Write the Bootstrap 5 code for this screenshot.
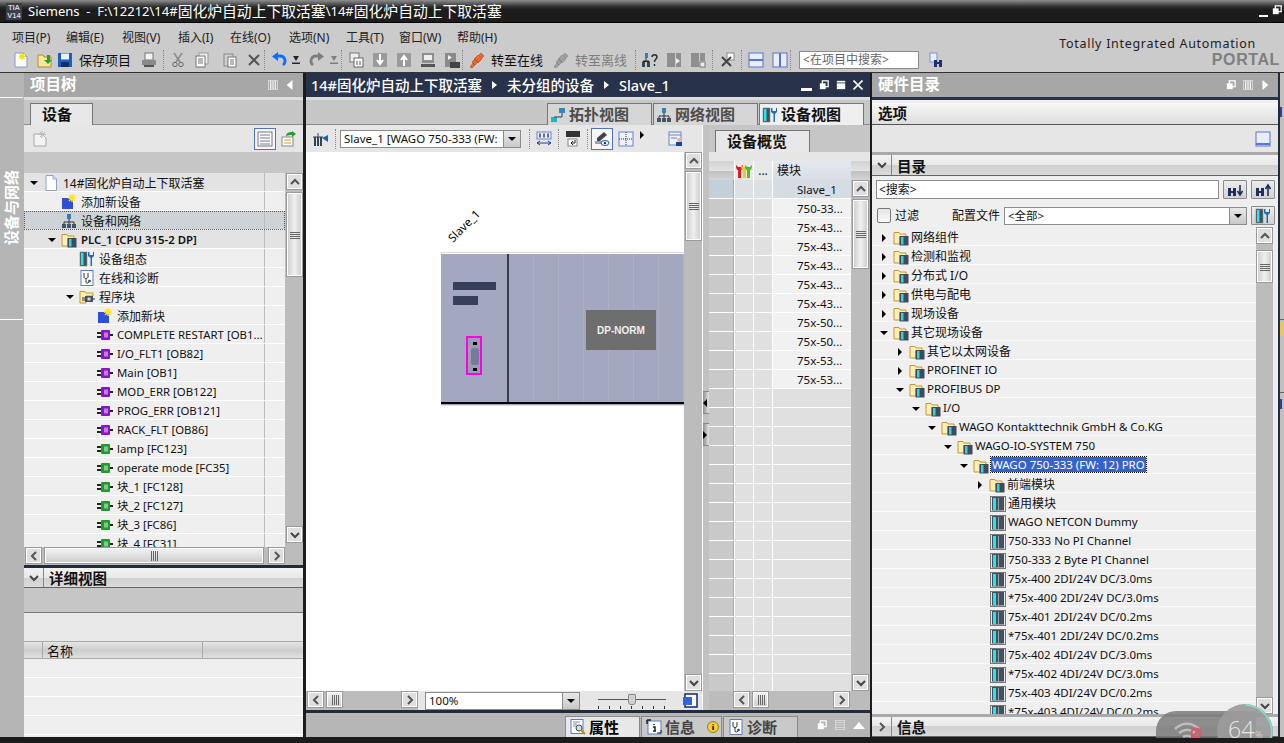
<!DOCTYPE html>
<html lang="zh-CN">

<head>
  <meta charset="UTF-8" />
  <meta name="viewport" content="width=device-width, initial-scale=1" />
  <title>Siemens - TIA Portal</title>
  <link href="https://cdn.jsdelivr.net/npm/bootstrap@5.3.3/dist/css/bootstrap.min.css" rel="stylesheet" />
  <style>
    html, body { height: 100%; }
    body {
      width: 1284px;
      height: 743px;
      overflow: hidden;
      background: #1c1c1c;
      color: #111;
      font-family: "Noto Sans", "Noto Sans CJK SC", sans-serif;
      font-size: 11.5px;
      line-height: 1;
    }
    svg { display: block; flex: none; }
    .ic { width: 16px; height: 16px; }
    .ic-s { width: 10px; height: 10px; }
    .cn { font-size: 12px; }
    .text-ob { color: #8a12c9; }
    .text-fc { color: #1f9a2e; }

    /* title bar */
    .title-bar { height: 23px; padding: 0 2px 0 6px; background: linear-gradient(#8e8e8e, #2a2a2a 7px, #1c1c1c 10px); border-bottom: 1px solid #000; color: #fff; font-size: 13px; }
    .title-cn { font-size: 14.8px; }
    .app-logo { width: 16px; height: 17px; margin-right: 6px; font: bold 7.5px/8px "Liberation Sans", sans-serif; text-align: center; color: #cfd3da; background: #3b3f45; padding-top: 1px; }
    .win-min { display: block; width: 9px; height: 2px; background: #fff; margin: 10px 4px 0 0; }

    /* menu + toolbar */
    .top-area { height: 50px; background: #cbcbcb; border-bottom: 1px solid #333; }
    .menu-row { height: 24px; padding: 5px 0 0 12px; font-size: 12px; color: #222; }
    .menu-row span { display: block; width: 56px; }
    .menu-row span:nth-child(1) { width: 54px; }
    .menu-row span:nth-child(4) { width: 52px; }
    .menu-row span:nth-child(5) { width: 59px; }
    .menu-row span:nth-child(6) { width: 57px; }
    .menu-row span:nth-child(7) { width: 53px; }
    .menu-row span:nth-child(8) { width: 58px; }
    .tool-row { height: 26px; padding-left: 11px; font-size: 13px; }
    .tb { width: 20px; height: 20px; display: flex; align-items: center; justify-content: center; flex: none; }
    .tb-n { width: 14px; }
    .tb-sep { width: 1px; height: 20px; border-left: 1px dotted #8a8a8a; flex: none; }
    .txt-off { color: #7d7d7d; }
    .proj-search { width: 120px; height: 18px; background: #fff; border: 1px solid #8c8c8c; padding: 2px 3px; font-size: 12px; color: #666; flex: none; }
    .brand { width: 250px; padding: 15px 4px 0 0; text-align: right; flex: none; }
    .brand-a { font-size: 12.5px; margin-right: 24px; letter-spacing: .7px; color: #222; }
    .brand-b { font: bold 16px "Liberation Sans", sans-serif; color: #7f7f7f; letter-spacing: .6px; }

    /* workspace */
    .work { height: 664px; }
    .side-strip { width: 24px; background: #b5b5b5; }
    .strip-line { height: 1px; background: #fff; width: 23px; }
    .strip-mid { height: 221px; padding-top: 71px; }
    .strip-txt { writing-mode: vertical-rl; text-orientation: sideways; transform: rotate(180deg); color: #fff; font-weight: 700; font-size: 15px; height: 76px; width: 23px; line-height: 23px; text-align: center; }
    .tree-pane { width: 279px; }
    .center-pane { width: 564px; margin-left: 3px; }
    .cat-pane { width: 408px; margin-left: 2px; border-right: 2px solid #222b3c; background: #efefef; }
    .right-strip { width: 4px; background: #c0c0c0; }
    .edge-a { margin-top: 34px; height: 10px; border-left: 2px solid #2f3f8f; }
    .edge-b { margin-top: 202px; height: 1px; background: #666; }
    .edge-c { margin-top: 2px; height: 14px; background: #e8c668; }
    .edge-d { margin-top: 56px; height: 1px; background: #666; }
    .edge-e { margin-top: 6px; height: 10px; border-left: 2px solid #2f3f8f; }

    .pane-head { height: 24px; background: #a7a7a7; color: #fff; font-weight: 700; font-size: 15.5px; padding: 0 8px 0 6px; }
    .head-tools { gap: 7px; }
    .crumb-head { height: 24px; background: #28324a; color: #fff; font-size: 14.5px; font-weight: 500; padding: 0 7px 0 5px; }
    .crumb-arrow { width: 0; height: 0; border-left: 5px solid #fff; border-top: 4px solid transparent; border-bottom: 4px solid transparent; margin: 0 10px; }
    .crumb-min { display: block; width: 11px; height: 3px; background: #fff; margin-top: 8px; }

    .tab-band { height: 28px; background: linear-gradient(#dddddd 3px, #c6c6c6 3px); border-bottom: 1px solid #8a8a8a; padding: 6px 0 0 6px; }
    .tab-x { width: 63px; height: 22px; background: #e8e8e8; border: 1px solid #777; border-bottom: 0; font-weight: 700; font-size: 15px; display: flex; align-items: center; padding-left: 11px; }
    .tool-band { height: 27px; background: #e6e6e6; }
    .gray-band { height: 21px; background: #c6c6c6; }

    /* trees */
    .tree-row { height: 19px; padding-top: 2px; background: #efefef linear-gradient(#bcbcbc, #bcbcbc) 240px 0 / 1px 100% no-repeat; border-bottom: 1px solid #fff; padding-left: calc(var(--lv, 0) * 18px); white-space: nowrap; font-size: 11.4px; }
    .tree-row .cn { margin-top: 2px; }
    .tree-row.grp { background-color: #e3e3e3; }
    .tree-row.sel { background-color: #ced3d8; outline: 1px dotted #555; outline-offset: -1px; }
    .caret-slot { width: 17px; display: flex; justify-content: center; flex: none; }
    .caret-d { width: 0; height: 0; border-top: 4px solid #000; border-left: 4px solid transparent; border-right: 4px solid transparent; margin-left: 2px; }
    .caret-r { width: 0; height: 0; border-left: 4px solid #000; border-top: 4px solid transparent; border-bottom: 4px solid transparent; }
    .caret-l { width: 0; height: 0; border-right: 4px solid #000; border-top: 4px solid transparent; border-bottom: 4px solid transparent; }
    .row-ic { margin: 0 4px 0 2px; }
    .lv-1 { --lv: 1; } .lv-2 { --lv: 2; } .lv-3 { --lv: 3; } .lv-4 { --lv: 4; } .lv-5 { --lv: 5; } .lv-6 { --lv: 6; }
    .tree-list { width: 261px; height: 374px; overflow: hidden; }
    .cat-list { width: 384px; height: 487px; overflow: hidden; }
    .cat-row { height: 19px; padding-top: 3px; border-bottom: 1px solid #fafafa; padding-left: calc(4px + var(--lv, 0) * 16px); white-space: nowrap; gap: 2px; background: #efefef; }
    .cat-row .caret-slot { width: 16px; }
    .cat-row .ic { margin-left: -1px; }
    .cat-row .ic.no-caret { margin-left: 18px; }
    .cat-row > span:not(.cn):not(.caret-slot) { margin-top: -2px; }
    .cat-sel { background: #3563c9; color: #fff; outline: 1px dotted #111; padding: 2px 1px; }

    /* scroll bars */
    .vscroll { width: 18px; background: #bcbcbc; padding: 0 1px; flex: none; }
    .sb-btn { width: 17px; height: 17px; background: #dfdfdf; border: 2px solid #fff; outline: 1px solid #9a9a9a; outline-offset: -1px; display: flex; align-items: center; justify-content: center; flex: none; }
    .sb-thumb { background: linear-gradient(90deg, #d0d0d0, #f0f0f0 50%, #d0d0d0); border: 2px solid #fff; outline: 1px solid #9a9a9a; outline-offset: -1px; display: flex; align-items: center; justify-content: center; flex: none; }
    .thumb-tree { height: 85px; width: 17px; margin-top: 2px; }
    .thumb-canvas { height: 70px; width: 17px; margin-top: 2px; }
    .thumb-ov { height: 70px; width: 17px; margin-top: 2px; }
    .thumb-cat { height: 33px; width: 17px; margin-top: 6px; }
    .hscroll { height: 18px; background: #bcbcbc; }
    .thumb-h { height: 17px; background: linear-gradient(#f0f0f0, #d0d0d0); }
    .thumb-wide { width: 220px; margin: 0 4px 0 2px; }
    .thumb-small { width: 17px; margin-left: 2px; }
    .btn-first { margin-left: 1px; }

    /* detail view */
    .sep-dark { height: 3px; background: #222b3c; }
    .sect-head { background: linear-gradient(#f2f2f2, #e8e8e8 50%, #d0d0d0 50%, #dadada); border-bottom: 1px solid #666; font-weight: 700; font-size: 14.5px; }
    .sect-chev { width: 20px; height: 100%; display: flex; align-items: center; justify-content: center; border-right: 1px solid #888; margin-right: 5px; }
    .sect-txt { padding-top: 2px; }
    .detail-head { height: 20px; }
    .detail-band { height: 25px; background: #c6c6c6; border-bottom: 1px solid #777; }
    .detail-blank { height: 28px; background: #e9e9e9; }
    .detail-cols { height: 18px; background: linear-gradient(#e6e6e6, #cdcdcd 50%, #e0e0e0); border-top: 1px solid #aaa; border-bottom: 1px solid #aaa; font-size: 13px; }
    .dc-a { width: 19px; border-right: 1px solid #aaa; height: 100%; }
    .dc-b { width: 160px; border-right: 1px solid #aaa; height: 100%; padding: 3px 0 0 4px; }
    .detail-rows { height: 78px; background: repeating-linear-gradient(#efefef 0 18px, #fff 18px 19px); }

    /* centre */
    .view-tabs { height: 28px; background: linear-gradient(#dcdcdc 3px, #c6c6c6 3px); border-bottom: 1px solid #8a8a8a; padding: 6px 6px 0 0; gap: 1px; }
    .view-tab { width: 105px; height: 22px; background: #d6d6d6; border: 1px solid #777; border-bottom: 0; color: #4d4d4d; font-weight: 700; font-size: 15px; gap: 3px; padding-left: 2px; }
    .view-tab.on { background: #efefef; color: #111; }
    .center-body { height: 585px; }
    .editor { width: 396px; }
    .ed-tools { padding-left: 5px; height: 27px; background: #e6e6e6; }
    .combo { height: 18px; background: #fff; border: 1px solid #8c8c8c; font-size: 11.5px; overflow: hidden; white-space: nowrap; flex: none; }
    .combo-txt { flex: 1; overflow: hidden; padding-left: 3px; line-height: 16px; }
    .combo-btn { width: 17px; height: 100%; background: linear-gradient(#e8e8e8, #c8c8c8); border-left: 1px solid #8c8c8c; display: flex; align-items: center; justify-content: center; flex: none; }
    .combo-dev { width: 181px; }
    .tb-on { outline: 1px solid #4e73c9; background: #f5f7fb; }
    .canvas-row { height: 539px; }
    .canvas-area { width: 378px; background: #fff; position: relative; overflow: hidden; }
    .dev-label { position: absolute; left: 149px; top: 79px; transform: rotate(-45deg); transform-origin: left bottom; font-size: 11.5px; line-height: 14px; color: #000; }
    .rack { position: absolute; left: 135px; top: 100px; width: 243px; height: 154px; border-top: 1px solid #d8d8e0; border-bottom: 1px solid #e0e0e0; background: #a3a8c0; }
    .rack-inner { height: 151px; border-top: 1px solid #fff; border-bottom: 2px solid #000; position: relative; }
    .rack-head { width: 68px; height: 100%; border-right: 2px solid #373d50; position: relative; }
    .rack-slots { flex: 1; background: repeating-linear-gradient(90deg, #a3a8c0 0 24px, #adb1c4 24px 25px); }
    .rack-bar-a { position: absolute; left: 12px; top: 28px; width: 43px; height: 8px; background: #37405a; }
    .rack-bar-b { position: absolute; left: 12px; top: 42px; width: 25px; height: 9px; background: #37405a; }
    .rack-port { position: absolute; left: 25px; top: 82px; width: 16px; height: 39px; border: 2px solid #ff00e6; background: #9a9fb0; }
    .port-shape { position: absolute; left: 3px; top: 10px; width: 8px; height: 17px; background: #737c98; border-radius: 2px; }
    .port-dot { position: absolute; left: 5px; width: 4px; height: 3px; background: #000; }
    .dot-a { top: 4px; } .dot-b { top: 30px; }
    .dp-box { position: absolute; left: 145px; top: 56px; width: 70px; height: 40px; background: #6e6e6e; color: #eee; font: bold 10px "Liberation Sans", sans-serif; }
    .ed-bottom { height: 19px; background: #e6e6e6; }
    .h-track { width: 112px; background: #bcbcbc; height: 19px; padding-left: 1px; flex: none; }
    .combo-zoom { width: 155px; margin-left: 7px; }
    .zoom-slider { width: 68px; margin-left: 18px; position: relative; height: 19px; }
    .zoom-line { position: absolute; left: 0; right: 0; top: 8px; height: 1px; background: #555; }
    .zoom-knob { position: absolute; left: 30px; top: 3px; width: 8px; height: 11px; background: #d0d0d0; border: 1px solid #888; border-radius: 1px 1px 3px 3px; }
    .zoom-ticks { position: absolute; left: 0; right: 0; top: 15px; height: 3px; background: repeating-linear-gradient(90deg, #333 0 1px, transparent 1px 11px); }
    .splitter { width: 7px; background: #c2c2c2; border-left: 1px solid #fff; }
    .split-grip { height: 23px; background: linear-gradient(90deg, #8e8e8e, #e4e4e4); border-top: 1px solid #888; border-bottom: 1px solid #888; display: flex; align-items: center; }
    .grip-a { margin-top: 266px; }
    .grip-b { margin-top: 9px; }

    /* device overview */
    .overview { width: 161px; }
    .ov-band { height: 27px; background: #c6c6c6; padding: 5px 0 0 6px; }
    .ov-tab { width: 95px; height: 22px; background: #e8e8e8; border: 1px solid #777; border-bottom: 0; font-weight: 700; font-size: 15px; padding-left: 11px; }
    .ov-gap { height: 9px; background: #e6e6e6; }
    .ov-head { height: 19px; background: linear-gradient(#d2d2d2, #e2e2e2 50%, #bfbfbf 50%, #d5d5d5); font-size: 12px; }
    .oc-a { width: 25px; flex: none; height: 100%; }
    .oc-b, .oc-c { width: 19px; flex: none; height: 100%; border-left: 1px solid #fff; }
    .oc-d { width: 79px; flex: none; height: 100%; border-left: 1px solid #fff; }
    .ov-head .oc-d { background: linear-gradient(#e4e9ee, #d7dde4); padding: 4px 0 0 4px; }
    .ov-head .oc-b, .ov-head .oc-c { background: #e8e8e8; }
    .ov-rows { width: 142px; height: 511px; overflow: hidden; }
    .ov-row { height: 19px; border-bottom: 1px solid #fff; }
    .ov-row .oc-a { background: #c9c9c9; border-right: 1px solid #aaa; }
    .ov-row .oc-b, .ov-row .oc-c { background: #e0e0e0; }
    .ov-row .oc-d { background: #e0e0e0; padding: 4px 0 0 24px; font-size: 11.5px; white-space: nowrap; }
    .ov-row.full .oc-d { background: #f1f1f1; }
    .ov-row.cur .oc-a { background: #c4d0d9; }
    .ov-row.cur .oc-d { background: #d5dce3; }
    .ov-row.cur .oc-b, .ov-row.cur .oc-c { background: #dde1e4; }
    .ov-scroll { width: 19px; }
    .ov-hbar { height: 19px; background: #bcbcbc; padding-left: 24px; }
    .ov-htrack { width: 117px; }

    .insp-bar { height: 24px; background: #b6b6b6; padding-right: 5px; }
    .insp-tab { height: 21px; border: 1px solid #8a8a8a; border-bottom: 0; background: #c9c9c9; color: #444; font-weight: 700; font-size: 15px; gap: 3px; margin-top: 3px; padding-left: 4px; }
    .insp-tab.on { background: #e8e8e8; color: #000; }
    .it-a { width: 75px; } .it-b { width: 81px; margin-left: 1px; } .it-c { width: 75px; margin-left: 1px; }
    .insp-tools { margin-left: 19px; gap: 8px; }
    .tri-up { width: 0; height: 0; border-bottom: 7px solid #fff; border-left: 6px solid transparent; border-right: 6px solid transparent; }
    .info-dot { width: 12px; height: 12px; border-radius: 50%; background: #f2cf2f; border: 1px solid #9c8214; color: #000; font: bold 9px/10px "Liberation Serif", serif; text-align: center; margin-left: 9px; }

    /* catalog */
    .opt-head { height: 25px; background: linear-gradient(#f6f6f6, #dedede); border-bottom: 1px solid #555; border-top: 3px solid #f0f0f0; font-weight: 700; font-size: 14.5px; padding-left: 6px; }
    .navy-line { height: 3px; background: #28324a; }
    .opt-body { height: 27px; background: #e6e6e6; padding-right: 3px; }
    .thin-gray { height: 3px; background: #a9a9a9; }
    .cat-head { height: 21px; }
    .search-row { height: 27px; background: #efefef; padding: 4px 3px 3px 4px; gap: 4px; }
    .search-in { width: 343px; height: 19px; background: #fff; border: 1px solid #8c8c8c; padding: 3px 2px; font-size: 12px; flex: none; }
    .icon-btn { width: 24px; height: 19px; background: linear-gradient(#ececec, #d2d2d2); border: 1px solid #8c8c8c; display: flex; align-items: center; justify-content: center; flex: none; border-radius: 1px; }
    .filter-row { height: 24px; background: #efefef; padding: 3px 3px 2px 5px; font-size: 12px; }
    .check-box { width: 14px; height: 15px; background: linear-gradient(#e4e4e4, #fafafa); border: 1px solid #777; border-radius: 2px; margin-right: 4px; }
    .combo-prof { width: 243px; margin: 0 4px; }
    .cat-scroll { width: 17px; padding: 0; }
    .cat-pad { width: 5px; }
    .info-head { height: 20px; }

    /* tray widget over the window */
    .net-pill { position: absolute; left: 1156px; top: 711px; width: 100px; height: 27px; background: rgba(120, 120, 120, .82); border-radius: 20px 0 0 0; }
    .net-ring { position: absolute; left: 1216px; top: 703px; width: 58px; height: 35px; }
    .net-wifi { position: absolute; left: 1173px; top: 720px; width: 32px; height: 18px; }
    .net-pct { position: absolute; left: 1228px; top: 718px; color: #e6e6e6; font: 300 23px/23px "Open Sans", sans-serif; }
    .net-pct small { font-size: 9px; margin-left: 1px; }
  </style>
</head>

<body class="position-relative">

  <!-- icon sprites -->
  <svg width="0" height="0" class="position-absolute">
    <symbol id="i-folder" viewBox="0 0 16 16"><path d="M1 2.5h5l1 1.500h6v3H7v7H1z" fill="#fdeeb5" stroke="#c7962c"/><rect x="6.500" y="6" width="9" height="9.500" fill="#3f4b5c"/><rect x="8" y="7" width="2.500" height="7.500" fill="#2fd5dc"/></symbol>
    <symbol id="i-mod" viewBox="0 0 16 16"><rect x=".5" y=".5" width="15" height="15" fill="#e8e8e8" stroke="#777"/><rect x="2" y="1" width="12" height="13.500" fill="#45505f"/><rect x="3" y="2" width="3" height="12" fill="#1fe6f0"/><rect x="8" y="2" width="1" height="12" fill="#9aa3ad"/></symbol>
    <symbol id="i-block" viewBox="0 0 16 16"><rect x="4" y="3" width="9" height="10" rx="1" fill="currentColor"/><rect y="5" width="4" height="2" fill="#222"/><rect y="9" width="4" height="2" fill="#222"/><rect x="13" y="7" width="3" height="2" fill="#222"/><rect x="7" y="5.500" width="4" height="5" fill="#fff" opacity=".45"/></symbol>
    <symbol id="i-add" viewBox="0 0 16 16"><rect x="1" y="4" width="11" height="11" fill="#2f4fd6"/><path d="M11 0v8M7 4h8M8 1l6 6M14 1 8 7" stroke="#ffe81a" stroke-width="1.400"/></symbol>
    <symbol id="i-net" viewBox="0 0 16 16"><rect x="6" y="1" width="4" height="5" fill="#2f7fb8"/><path d="M8 6v3M3 12V9h10v3M8 9v3" stroke="#333" fill="none"/><rect x="1" y="11" width="4" height="4" fill="#456"/><rect x="6" y="11" width="4" height="4" fill="#456"/><rect x="11" y="11" width="4" height="4" fill="#456"/></symbol>
    <symbol id="i-cfg" viewBox="0 0 16 16"><rect x="1" y="1" width="7" height="14" fill="#45505f" stroke="#888" stroke-width=".6"/><rect x="2" y="2" width="2.500" height="12" fill="#1fe6f0"/><path d="M9 1v4l2.500 2v8h1.500V7l2-2V1h-1v3h-3.500V1z" fill="#1c6fb5"/></symbol>
    <symbol id="i-diag" viewBox="0 0 16 16"><rect x="2" y=".5" width="12" height="15" fill="#fff" stroke="#5b7ac7"/><path d="M5 3v4c0 2 4 2 4 0V3M7 9v3c0 1.500 2 1.500 3 0" stroke="#333" fill="none"/><circle cx="10.500" cy="11" r="1.300" fill="#1d3d8f"/></symbol>
    <symbol id="i-doc" viewBox="0 0 16 16"><path d="M3 .5h7l3.500 3.500v11.500H3z" fill="#fff" stroke="#8aa0cf"/><path d="M10 .5V4h3.500" fill="#dfe6f5" stroke="#8aa0cf"/></symbol>
    <symbol id="i-pfolder" viewBox="0 0 16 16"><path d="M1 2.500h5l1 1.500h7v3H7v7H1z" fill="#fdeeb5" stroke="#c7962c"/><rect x="6" y="7" width="8" height="6" fill="#454f5d"/><path d="M3 9h3M3 11h3M14 10h2" stroke="#333"/><rect x="8.500" y="8.500" width="3" height="3" fill="#cfd6dd"/></symbol>
    <symbol id="i-chev-up" viewBox="0 0 10 10"><path d="M1 7l4-4 4 4" fill="none" stroke="#555" stroke-width="2"/></symbol>
    <symbol id="i-chev-dn" viewBox="0 0 10 10"><path d="M1 3l4 4 4-4" fill="none" stroke="#444" stroke-width="2"/></symbol>
    <symbol id="i-chev-l" viewBox="0 0 10 10"><path d="M7 1 3 5l4 4" fill="none" stroke="#555" stroke-width="2"/></symbol>
    <symbol id="i-chev-r" viewBox="0 0 10 10"><path d="M3 1l4 4-4 4" fill="none" stroke="#555" stroke-width="2"/></symbol>
    <symbol id="i-grip-h" viewBox="0 0 10 10"><path d="M0 2.500h10M0 4.500h10M0 6.500h10M0 8.500h10" stroke="#666"/></symbol>
    <symbol id="i-grip-v" viewBox="0 0 10 10"><path d="M2.500 0v10M4.500 0v10M6.500 0v10M8.500 0v10" stroke="#666"/></symbol>
    <symbol id="i-new" viewBox="0 0 16 16"><path d="M2 1h8l4 4v10H2z" fill="#fff" stroke="#7f9ad6"/><path d="M9 1v7M6 4.500h7M6.500 2l5 5M11.500 2l-5 5" stroke="#f6e100" stroke-width="1.200"/></symbol>
    <symbol id="i-open" viewBox="0 0 16 16"><path d="M1 3h5l1 2h7v10H1z" fill="#fbe49b" stroke="#b48a2b"/><path d="M7 8h3V3h3v5h2l-4 4z" fill="#1ea32f"/></symbol>
    <symbol id="i-save" viewBox="0 0 16 16"><rect x="1" y="1" width="14" height="14" fill="#1f5dbb"/><rect x="4" y="1.500" width="8" height="6" fill="#eaf1fb"/><rect x="4" y="10" width="8" height="5" fill="#0f2f6a"/></symbol>
    <symbol id="i-print" viewBox="0 0 16 16"><rect x="4" y="1" width="8" height="7" fill="#f4f4f4" stroke="#777"/><rect x="1" y="8" width="14" height="5" fill="#8a8a8a"/><rect x="3" y="13" width="10" height="2" fill="#555"/></symbol>
    <symbol id="i-cut" viewBox="0 0 16 16"><path d="M4 1l6 9M12 1 6 10" stroke="#8a8a8a" stroke-width="1.500"/><circle cx="5" cy="12.500" r="2.200" fill="none" stroke="#666"/><circle cx="11" cy="12.500" r="2.200" fill="none" stroke="#666"/></symbol>
    <symbol id="i-copy" viewBox="0 0 16 16"><rect x="5" y="1" width="9" height="11" fill="#eee" stroke="#999"/><rect x="2" y="4" width="9" height="11" fill="#fafafa" stroke="#777"/><path d="M4 7h5M4 9h5M4 11h5" stroke="#777"/></symbol>
    <symbol id="i-paste" viewBox="0 0 16 16"><rect x="2" y="2" width="9" height="12" fill="#cfcfcf" stroke="#888"/><rect x="6" y="5" width="8" height="10" fill="#fafafa" stroke="#777"/><path d="M8 8h4M8 10h4M8 12h4" stroke="#777"/></symbol>
    <symbol id="i-del" viewBox="0 0 16 16"><path d="M3 3l10 10M13 3 3 13" stroke="#555" stroke-width="2"/></symbol>
    <symbol id="i-x-w" viewBox="0 0 10 10"><path d="M.5.5l9 9M9.500.5l-9 9" stroke="#fff" stroke-width="1.600"/></symbol>
    <symbol id="i-undo" viewBox="0 0 16 16"><path d="M4 4h5a5 5 0 0 1 3 9" fill="none" stroke="currentColor" stroke-width="2.800"/><path d="M1 4.500 7 0v9z" fill="currentColor"/></symbol>
    <symbol id="i-redo" viewBox="0 0 16 16"><path d="M12 4H7a5 5 0 0 0-3 9" fill="none" stroke="currentColor" stroke-width="2.800"/><path d="M15 4.500 9 0v9z" fill="currentColor"/></symbol>
    <symbol id="i-drop" viewBox="0 0 10 10"><path d="M2 1h6L5 6z" fill="currentColor"/><rect x="1" y="7.500" width="8" height="1.500" fill="currentColor"/></symbol>
    <symbol id="i-gray-a" viewBox="0 0 16 16"><rect x="2" y="1" width="9" height="9" fill="#eee" stroke="#777"/><rect x="6" y="6" width="9" height="9" fill="#fff" stroke="#666"/><path d="M9 9v4M12 9v4" stroke="#555"/></symbol>
    <symbol id="i-gray-b" viewBox="0 0 16 16"><rect x="1" y="1" width="14" height="14" fill="#9a9a9a"/><path d="M8 2v9M5 8l3 4 3-4" stroke="#fff" stroke-width="2" fill="none"/></symbol>
    <symbol id="i-gray-c" viewBox="0 0 16 16"><rect x="1" y="1" width="14" height="14" fill="#9a9a9a"/><path d="M8 14V5M5 8l3-4 3 4" stroke="#fff" stroke-width="2" fill="none"/></symbol>
    <symbol id="i-gray-d" viewBox="0 0 16 16"><rect x="2" y="1" width="12" height="10" fill="#8f8f8f"/><rect x="4" y="3" width="8" height="5" fill="#eee"/><rect x="1" y="12" width="14" height="3" fill="#555"/></symbol>
    <symbol id="i-gray-e" viewBox="0 0 16 16"><rect x="1" y="1" width="11" height="14" fill="#8a8a8a"/><path d="M4 3v5l4-2.500z" fill="#eee"/><rect x="6" y="10" width="10" height="6" fill="#444"/></symbol>
    <symbol id="i-online" viewBox="0 0 16 16"><path d="M1 15l3-4 2 2-3 3zM6 7l3 3-3 3-3-3zM9 3l4 4-4 4-4-4zM12 1l3 3-2 2-3-3z" fill="#f0682a" stroke="#a33d10" stroke-width=".5"/></symbol>
    <symbol id="i-offline" viewBox="0 0 16 16"><path d="M1 15l3-4 2 2-3 3zM6 7l3 3-3 3-3-3zM9 3l4 4-4 4-4-4zM12 1l3 3-2 2-3-3z" fill="#a0a0a0" stroke="#777" stroke-width=".5"/></symbol>
    <symbol id="i-netq" viewBox="0 0 16 16"><rect x="3" y="1" width="3" height="5" fill="#2f7fb8"/><rect y="10" width="3" height="5" fill="#345"/><rect x="5" y="10" width="3" height="5" fill="#345"/><path d="M4 6v3M1 10V9h6v1" stroke="#333"/><path d="M10 5c0-3 5-3 5 0 0 2-2.500 2-2.500 5M12.500 12v2" stroke="#233" stroke-width="1.500" fill="none"/></symbol>
    <symbol id="i-split-a" viewBox="0 0 16 16"><rect x="1" y="1" width="8" height="14" fill="#8f8f8f"/><rect x="10" y="1" width="5" height="14" fill="#8f8f8f"/><path d="M10 6l4 3-4 3z" fill="#eee"/></symbol>
    <symbol id="i-split-b" viewBox="0 0 16 16"><rect x="1" y="1" width="8" height="14" fill="#8f8f8f"/><rect x="10" y="1" width="5" height="8" fill="#8f8f8f"/><rect x="10" y="10" width="5" height="5" fill="#eee" stroke="#777"/></symbol>
    <symbol id="i-closex" viewBox="0 0 16 16"><rect x="8" y="1" width="7" height="7" fill="#fff" stroke="#888"/><path d="M3 5l9 9M12 5l-9 9" stroke="#444" stroke-width="2"/></symbol>
    <symbol id="i-hsplit" viewBox="0 0 16 16"><rect x="1" y="1" width="14" height="14" fill="#e8eefb" stroke="#5a75d0"/><path d="M1 8h14" stroke="#5a75d0" stroke-width="2"/></symbol>
    <symbol id="i-vsplit" viewBox="0 0 16 16"><rect x="1" y="1" width="14" height="14" fill="#e8eefb" stroke="#5a75d0"/><path d="M8 1v14" stroke="#5a75d0" stroke-width="2"/></symbol>
    <symbol id="i-panel" viewBox="0 0 16 16"><rect x="1" y="1" width="14" height="14" fill="#e8eefb" stroke="#5a75d0"/><path d="M1 13h14" stroke="#5a75d0" stroke-width="2"/></symbol>
    <symbol id="i-binoc" viewBox="0 0 16 16"><rect x="1" y="1" width="7" height="9" fill="#e8eefb" stroke="#7f93c9"/><path d="M5 8h3v7H5zM10 8h3v7h-3zM8 10h2v2H8z" fill="#1d2f7a"/></symbol>
    <symbol id="i-search-dn" viewBox="0 0 16 16"><path d="M1 6h3v8H1zM6 6h3v8H6zM4 9h2v2H4z" fill="#1d2f5a"/><path d="M13 3v9M10.500 9l2.500 4 2.500-4" stroke="#1d2f5a" stroke-width="1.600" fill="none"/></symbol>
    <symbol id="i-search-up" viewBox="0 0 16 16"><path d="M1 6h3v8H1zM6 6h3v8H6zM4 9h2v2H4z" fill="#1d2f5a"/><path d="M13 14V4M10.500 7 13 3l2.500 4" stroke="#1d2f5a" stroke-width="1.600" fill="none"/></symbol>
    <symbol id="i-tree-view" viewBox="0 0 16 16"><rect x="1" y="1" width="14" height="14" fill="#fff" stroke="#777"/><path d="M3 4h10M3 7h10M3 10h10M3 13h10" stroke="#778"/></symbol>
    <symbol id="i-export" viewBox="0 0 16 16"><rect x="1" y="6" width="11" height="9" fill="#fff" stroke="#888"/><path d="M3 9h7M3 12h7" stroke="#c9a52a"/><path d="M5 5c0-3 3-4 6-4V0l4 3-4 3V4c-2 0-4 0-6 1z" fill="#1ea32f"/></symbol>
    <symbol id="i-add-gray" viewBox="0 0 16 16"><path d="M2 3h8l4 4v8H2z" fill="#f4f4f4" stroke="#a8a8a8"/><path d="M10 0v7M7 3.500h7M8 1l5 5M13 1 8 6" stroke="#b9b9b9"/></symbol>
    <symbol id="i-topo" viewBox="0 0 16 16"><rect x="9" y="1" width="6" height="5" fill="#2f86c4"/><rect x="1" y="10" width="6" height="5" fill="#21b4c9"/><path d="M12 6v4H4" stroke="#245" fill="none"/></symbol>
    <symbol id="i-zoomdoc" viewBox="0 0 16 16"><rect x="1" y=".5" width="12" height="14" fill="#fff" stroke="#5b7ac7"/><path d="M3 3h7M3 5h4M3 7h3" stroke="#889"/><circle cx="9" cy="9" r="3" fill="#cfe0f5" stroke="#444"/><path d="M11 11l4 4" stroke="#c08a1c" stroke-width="2"/></symbol>
    <symbol id="i-infodoc" viewBox="0 0 16 16"><rect x="2" y="2" width="13" height="13" fill="#fff" stroke="#5b7ac7"/><path d="M1 1h4M1 1v4" stroke="#123" stroke-width="1.500"/><path d="M8 5v1M7 8h2v4M7 12h3" stroke="#123" stroke-width="1.500" fill="none"/><path d="M11 14h4M15 14v-3" stroke="#123"/></symbol>
    <symbol id="i-restore" viewBox="0 0 12 12"><rect x="4" y="1" width="7" height="7" fill="none" stroke="#fff" stroke-width="1.500"/><rect x="1" y="4" width="7" height="7" fill="#fff"/></symbol>
    <symbol id="i-stack" viewBox="0 0 12 12"><path d="M3 1v10M5 1v10M7 1v10M9 1v10" stroke="#fff"/><rect x=".5" y=".5" width="11" height="11" fill="none" stroke="#ddd"/></symbol>
    <symbol id="i-rows" viewBox="0 0 12 12"><path d="M1 3h10M1 6h10M1 9h10" stroke="#ddd"/><rect x=".5" y=".5" width="11" height="11" fill="none" stroke="#ddd"/></symbol>
    <symbol id="i-block-w" viewBox="0 0 12 12"><rect x="1" y="1" width="10" height="2" fill="#fff"/><rect x="1" y="4" width="10" height="7" fill="#fff"/></symbol>
    <symbol id="i-tri-l" viewBox="0 0 8 12"><path d="M7 0v12L0 6z" fill="#fff"/></symbol>
    <symbol id="i-tri-r" viewBox="0 0 8 12"><path d="M1 0v12l7-6z" fill="#fff"/></symbol>
    <symbol id="i-fit" viewBox="0 0 16 16"><rect x="3" y="1" width="12" height="13" fill="#fff" stroke="#12296b" stroke-width="1.500"/><rect x="1" y="4" width="9" height="8" fill="#2f63e0"/></symbol>
    <symbol id="i-devnet" viewBox="0 0 16 16"><rect x="1" y="6" width="2" height="9" fill="#345"/><rect x="4" y="6" width="2" height="9" fill="#345"/><rect x="7" y="6" width="2" height="9" fill="#345"/><path d="M5 2v4M0 6h10" stroke="#345"/><path d="M9 7l6-3v7z" fill="#1c5fb5"/></symbol>
    <symbol id="i-compare" viewBox="0 0 16 16"><rect x="1" y="1" width="14" height="7" fill="#e8eefb" stroke="#6a84cf"/><path d="M4 2.500v4M8 2.500v4M12 2.500v4" stroke="#445" stroke-width="1.500"/><path d="M1 12h14M4 10l-3 2 3 2M12 10l3 2-3 2" stroke="#1c3fa5" fill="none"/></symbol>
    <symbol id="i-name" viewBox="0 0 16 16"><rect x="1" width="14" height="6" fill="#333"/><rect x="3" y="8" width="9" height="7" fill="#fff" stroke="#888"/><path d="M10 9v3H6l2-2M6 12l2 2" stroke="#222" fill="none"/></symbol>
    <symbol id="i-eye" viewBox="0 0 16 16"><path d="M1 10h14v3H1z" fill="#9aa3b5"/><path d="M10 1l3 3-7 6H3V7z" fill="#444"/><ellipse cx="11" cy="12" rx="4" ry="2.500" fill="#fff" stroke="#1c5fb5"/><circle cx="11" cy="12" r="1.300" fill="#1c3fa5"/></symbol>
    <symbol id="i-grid" viewBox="0 0 16 16"><rect x="1" y="1" width="14" height="14" fill="#eef2fb" stroke="#6a84cf"/><path d="M1 8h14M8 1v14" stroke="#333" stroke-dasharray="1 1"/></symbol>
    <symbol id="i-winuser" viewBox="0 0 16 16"><rect x="1" y="1" width="12" height="13" fill="#eef2fb" stroke="#6a84cf"/><path d="M1 4h12M3 7h6" stroke="#6a84cf"/><circle cx="11" cy="9" r="2" fill="#e8b88a"/><rect x="8" y="11" width="6" height="4" fill="#1c3fa5"/></symbol>
    <symbol id="i-wrench" viewBox="0 0 16 16"><path d="M0 2c0 4 1 5 2 5v8h3V7c1 0 2-1 2-5L5 4H2z" fill="#d51f1f"/><path d="M5 2c0 4 1 5 2 5v8h3V7c1 0 2-1 2-5l-2 2H7z" fill="#f2c91c"/><path d="M9 2c0 4 1 5 2 5v8h3V7c1 0 2-1 2-5l-2 2h-3z" fill="#5cb531"/></symbol>
  </svg>

  <!-- Title bar -->
  <header class="title-bar d-flex align-items-center">
    <div class="app-logo">TIA<br>V14</div>
    <span>Siemens&nbsp; -&nbsp; F:\12212\14#</span><span class="title-cn">固化炉自动上下取活塞</span><span>\14#</span><span class="title-cn">固化炉自动上下取活塞</span>
    <div class="d-flex ms-auto">
      <span class="win-min"></span>
      <svg class="ic-s"><use href="#i-restore"/></svg>
    </div>
  </header>

  <!-- Menu and toolbar -->
  <div class="top-area d-flex">
    <div class="flex-grow-1">
      <nav class="menu-row d-flex align-items-center">
        <span>项目(P)</span>
        <span>编辑(E)</span>
        <span>视图(V)</span>
        <span>插入(I)</span>
        <span>在线(O)</span>
        <span>选项(N)</span>
        <span>工具(T)</span>
        <span>窗口(W)</span>
        <span>帮助(H)</span>
      </nav>
      <div class="tool-row d-flex align-items-center">
        <div class="tb"><svg class="ic"><use href="#i-new"/></svg></div>
        <div class="tb ms-1"><svg class="ic"><use href="#i-open"/></svg></div>
        <div class="tb"><svg class="ic"><use href="#i-save"/></svg></div>
        <span class="ms-1">保存项目</span>
        <div class="tb ms-2"><svg class="ic"><use href="#i-print"/></svg></div>
        <div class="tb-sep ms-1"></div>
        <div class="tb ms-1"><svg class="ic"><use href="#i-cut"/></svg></div>
        <div class="tb ms-1"><svg class="ic"><use href="#i-copy"/></svg></div>
        <div class="tb ms-2"><svg class="ic"><use href="#i-paste"/></svg></div>
        <div class="tb ms-1"><svg class="ic"><use href="#i-del"/></svg></div>
        <div class="tb-sep"></div>
        <div class="tb text-primary ms-1"><svg class="ic"><use href="#i-undo"/></svg></div>
        <div class="tb tb-n text-dark"><svg class="ic-s"><use href="#i-drop"/></svg></div>
        <div class="tb ms-1 txt-off"><svg class="ic"><use href="#i-redo"/></svg></div>
        <div class="tb tb-n txt-off"><svg class="ic-s"><use href="#i-drop"/></svg></div>
        <div class="tb-sep"></div>
        <div class="tb ms-1"><svg class="ic"><use href="#i-gray-a"/></svg></div>
        <div class="tb ms-1"><svg class="ic"><use href="#i-gray-b"/></svg></div>
        <div class="tb ms-1"><svg class="ic"><use href="#i-gray-c"/></svg></div>
        <div class="tb ms-1"><svg class="ic"><use href="#i-gray-d"/></svg></div>
        <div class="tb ms-1"><svg class="ic"><use href="#i-gray-e"/></svg></div>
        <div class="tb-sep"></div>
        <div class="tb ms-1"><svg class="ic"><use href="#i-online"/></svg></div>
        <span class="ms-1">转至在线</span>
        <div class="tb ms-2"><svg class="ic"><use href="#i-offline"/></svg></div>
        <span class="txt-off ms-1">转至离线</span>
        <div class="tb-sep ms-2"></div>
        <div class="tb ms-1"><svg class="ic"><use href="#i-netq"/></svg></div>
        <div class="tb ms-1"><svg class="ic"><use href="#i-split-a"/></svg></div>
        <div class="tb ms-1"><svg class="ic"><use href="#i-split-b"/></svg></div>
        <div class="tb-sep ms-1"></div>
        <div class="tb ms-1"><svg class="ic"><use href="#i-closex"/></svg></div>
        <div class="tb-sep ms-1"></div>
        <div class="tb ms-1"><svg class="ic"><use href="#i-hsplit"/></svg></div>
        <div class="tb ms-1"><svg class="ic"><use href="#i-vsplit"/></svg></div>
        <div class="tb-sep"></div>
        <div class="proj-search ms-2">&lt;在项目中搜索&gt;</div>
        <div class="tb ms-2"><svg class="ic"><use href="#i-binoc"/></svg></div>
      </div>
    </div>
    <div class="brand">
      <div class="brand-a">Totally Integrated Automation</div>
      <div class="brand-b">PORTAL</div>
    </div>
  </div>

  <main class="work d-flex">

    <!-- Portal strip -->
    <div class="side-strip d-flex flex-column">
      <div class="strip-line mt-4"></div>
      <div class="strip-mid"><div class="strip-txt">设备与网络</div></div>
      <div class="strip-line"></div>
    </div>

    <!-- Project tree -->
    <section class="tree-pane d-flex flex-column">
      <div class="pane-head d-flex align-items-center">
        <span>项目树</span>
        <div class="head-tools d-flex align-items-center ms-auto">
          <svg class="ic-s"><use href="#i-stack"/></svg>
          <svg class="ic-s"><use href="#i-tri-l"/></svg>
        </div>
      </div>
      <div class="tab-band"><div class="tab-x">设备</div></div>
      <div class="tool-band d-flex align-items-center px-1">
        <svg class="ic ms-1"><use href="#i-add-gray"/></svg>
        <div class="tb tb-on ms-auto"><svg class="ic"><use href="#i-tree-view"/></svg></div>
        <div class="tb ms-1"><svg class="ic"><use href="#i-export"/></svg></div>
      </div>
      <div class="gray-band"></div>
      <div class="d-flex">
        <div class="tree-list">
          <div class="tree-row grp d-flex align-items-center"><span class="caret-slot"><i class="caret-d"></i></span><svg class="ic row-ic"><use href="#i-doc"/></svg><span class="cn">14#固化炉自动上下取活塞</span></div>
          <div class="tree-row lv-1 d-flex align-items-center"><span class="caret-slot"></span><svg class="ic row-ic"><use href="#i-add"/></svg><span class="cn">添加新设备</span></div>
          <div class="tree-row sel lv-1 d-flex align-items-center"><span class="caret-slot"></span><svg class="ic row-ic"><use href="#i-net"/></svg><span class="cn">设备和网络</span></div>
          <div class="tree-row grp lv-1 d-flex align-items-center fw-semibold"><span class="caret-slot"><i class="caret-d"></i></span><svg class="ic row-ic"><use href="#i-folder"/></svg><span>PLC_1 [CPU 315-2 DP]</span></div>
          <div class="tree-row lv-2 d-flex align-items-center"><span class="caret-slot"></span><svg class="ic row-ic"><use href="#i-cfg"/></svg><span class="cn">设备组态</span></div>
          <div class="tree-row lv-2 d-flex align-items-center"><span class="caret-slot"></span><svg class="ic row-ic"><use href="#i-diag"/></svg><span class="cn">在线和诊断</span></div>
          <div class="tree-row lv-2 d-flex align-items-center"><span class="caret-slot"><i class="caret-d"></i></span><svg class="ic row-ic"><use href="#i-pfolder"/></svg><span class="cn">程序块</span></div>
          <div class="tree-row lv-3 d-flex align-items-center"><span class="caret-slot"></span><svg class="ic row-ic"><use href="#i-add"/></svg><span class="cn">添加新块</span></div>
          <div class="tree-row lv-3 d-flex align-items-center"><span class="caret-slot"></span><svg class="ic row-ic text-ob"><use href="#i-block"/></svg><span>COMPLETE RESTART [OB1...</span></div>
          <div class="tree-row lv-3 d-flex align-items-center"><span class="caret-slot"></span><svg class="ic row-ic text-ob"><use href="#i-block"/></svg><span>I/O_FLT1 [OB82]</span></div>
          <div class="tree-row lv-3 d-flex align-items-center"><span class="caret-slot"></span><svg class="ic row-ic text-ob"><use href="#i-block"/></svg><span>Main [OB1]</span></div>
          <div class="tree-row lv-3 d-flex align-items-center"><span class="caret-slot"></span><svg class="ic row-ic text-ob"><use href="#i-block"/></svg><span>MOD_ERR [OB122]</span></div>
          <div class="tree-row lv-3 d-flex align-items-center"><span class="caret-slot"></span><svg class="ic row-ic text-ob"><use href="#i-block"/></svg><span>PROG_ERR [OB121]</span></div>
          <div class="tree-row lv-3 d-flex align-items-center"><span class="caret-slot"></span><svg class="ic row-ic text-ob"><use href="#i-block"/></svg><span>RACK_FLT [OB86]</span></div>
          <div class="tree-row lv-3 d-flex align-items-center"><span class="caret-slot"></span><svg class="ic row-ic text-fc"><use href="#i-block"/></svg><span>lamp [FC123]</span></div>
          <div class="tree-row lv-3 d-flex align-items-center"><span class="caret-slot"></span><svg class="ic row-ic text-fc"><use href="#i-block"/></svg><span>operate mode [FC35]</span></div>
          <div class="tree-row lv-3 d-flex align-items-center"><span class="caret-slot"></span><svg class="ic row-ic text-fc"><use href="#i-block"/></svg><span>块_1 [FC128]</span></div>
          <div class="tree-row lv-3 d-flex align-items-center"><span class="caret-slot"></span><svg class="ic row-ic text-fc"><use href="#i-block"/></svg><span>块_2 [FC127]</span></div>
          <div class="tree-row lv-3 d-flex align-items-center"><span class="caret-slot"></span><svg class="ic row-ic text-fc"><use href="#i-block"/></svg><span>块_3 [FC86]</span></div>
          <div class="tree-row lv-3 d-flex align-items-center"><span class="caret-slot"></span><svg class="ic row-ic text-fc"><use href="#i-block"/></svg><span>块_4 [FC31]</span></div>
        </div>
        <div class="vscroll d-flex flex-column">
          <div class="sb-btn"><svg class="ic-s"><use href="#i-chev-up"/></svg></div>
          <div class="sb-thumb thumb-tree"><svg class="ic-s"><use href="#i-grip-h"/></svg></div>
          <div class="sb-btn mt-auto mb-1"><svg class="ic-s"><use href="#i-chev-dn"/></svg></div>
        </div>
      </div>
      <div class="hscroll d-flex">
        <div class="sb-btn btn-first"><svg class="ic-s"><use href="#i-chev-l"/></svg></div>
        <div class="sb-thumb thumb-h thumb-wide"><svg class="ic-s"><use href="#i-grip-v"/></svg></div>
        <div class="sb-btn"><svg class="ic-s"><use href="#i-chev-r"/></svg></div>
      </div>
      <div class="sep-dark"></div>
      <div class="sect-head detail-head d-flex align-items-center">
        <span class="sect-chev"><svg class="ic-s"><use href="#i-chev-dn"/></svg></span>
        <span class="sect-txt">详细视图</span>
      </div>
      <div class="detail-band"></div>
      <div class="detail-blank"></div>
      <div class="detail-cols d-flex">
        <div class="dc-a"></div>
        <div class="dc-b">名称</div>
      </div>
      <div class="detail-rows"></div>
    </section>

    <!-- Device editor -->
    <section class="center-pane d-flex flex-column">
      <div class="crumb-head d-flex align-items-center">
        <span>14#固化炉自动上下取活塞</span><i class="crumb-arrow"></i>
        <span>未分组的设备</span><i class="crumb-arrow"></i>
        <span>Slave_1</span>
        <div class="head-tools d-flex align-items-center ms-auto">
          <span class="crumb-min"></span>
          <svg class="ic-s"><use href="#i-restore"/></svg>
          <svg class="ic-s"><use href="#i-block-w"/></svg>
          <svg class="ic-s"><use href="#i-x-w"/></svg>
        </div>
      </div>
      <div class="view-tabs d-flex justify-content-end">
        <div class="view-tab d-flex align-items-center"><svg class="ic"><use href="#i-topo"/></svg>拓扑视图</div>
        <div class="view-tab d-flex align-items-center"><svg class="ic"><use href="#i-net"/></svg>网络视图</div>
        <div class="view-tab on d-flex align-items-center"><svg class="ic"><use href="#i-cfg"/></svg>设备视图</div>
      </div>
      <div class="center-body d-flex">
        <div class="editor d-flex flex-column">
          <div class="ed-tools d-flex align-items-center">
            <div class="tb"><svg class="ic"><use href="#i-devnet"/></svg></div>
            <div class="tb-sep ms-1 me-1"></div>
            <div class="combo combo-dev d-flex align-items-center">
              <div class="combo-txt">Slave_1 [WAGO 750-333 (FW:</div>
              <div class="combo-btn"><i class="caret-d m-0"></i></div>
            </div>
            <div class="tb-sep ms-2"></div>
            <div class="tb ms-1"><svg class="ic"><use href="#i-compare"/></svg></div>
            <div class="tb-sep ms-1"></div>
            <div class="tb ms-1"><svg class="ic"><use href="#i-name"/></svg></div>
            <div class="tb-sep ms-1"></div>
            <div class="tb tb-on ms-1"><svg class="ic"><use href="#i-eye"/></svg></div>
            <div class="tb ms-1"><svg class="ic"><use href="#i-grid"/></svg></div>
            <i class="caret-r ms-1 mb-2"></i>
            <div class="tb ms-auto me-3"><svg class="ic"><use href="#i-winuser"/></svg></div>
          </div>
          <div class="canvas-row d-flex">
            <div class="canvas-area">
              <div class="dev-label">Slave_1</div>
              <div class="rack">
                <div class="rack-inner d-flex">
                  <div class="rack-head">
                    <div class="rack-bar-a"></div>
                    <div class="rack-bar-b"></div>
                    <div class="rack-port">
                      <div class="port-dot dot-a"></div>
                      <div class="port-shape"></div>
                      <div class="port-dot dot-b"></div>
                    </div>
                  </div>
                  <div class="rack-slots"></div>
                  <div class="dp-box d-flex align-items-center justify-content-center">DP-NORM</div>
                </div>
              </div>
            </div>
            <div class="vscroll d-flex flex-column">
              <div class="sb-btn"><svg class="ic-s"><use href="#i-chev-up"/></svg></div>
              <div class="sb-thumb thumb-canvas"><svg class="ic-s"><use href="#i-grip-h"/></svg></div>
              <div class="sb-btn mt-auto"><svg class="ic-s"><use href="#i-chev-dn"/></svg></div>
            </div>
          </div>
          <div class="ed-bottom d-flex align-items-center">
            <div class="h-track d-flex">
              <div class="sb-btn"><svg class="ic-s"><use href="#i-chev-l"/></svg></div>
              <div class="sb-thumb thumb-h thumb-small"><svg class="ic-s"><use href="#i-grip-v"/></svg></div>
              <div class="sb-btn ms-auto"><svg class="ic-s"><use href="#i-chev-r"/></svg></div>
            </div>
            <div class="combo combo-zoom d-flex align-items-center">
              <div class="combo-txt">100%</div>
              <div class="combo-btn"><i class="caret-d m-0"></i></div>
            </div>
            <div class="zoom-slider">
              <div class="zoom-line"></div>
              <div class="zoom-ticks"></div>
              <div class="zoom-knob"></div>
            </div>
            <svg class="ic ms-auto me-1"><use href="#i-fit"/></svg>
          </div>
        </div>
        <div class="splitter">
          <div class="split-grip grip-a"><i class="caret-l"></i></div>
          <div class="split-grip grip-b"><i class="caret-r"></i></div>
        </div>
        <div class="overview d-flex flex-column">
          <div class="ov-band"><div class="ov-tab d-flex align-items-center">设备概览</div></div>
          <div class="ov-gap"></div>
          <div class="ov-head d-flex">
            <div class="oc-a"></div>
            <div class="oc-b d-flex align-items-center justify-content-center"><svg class="ic"><use href="#i-wrench"/></svg></div>
            <div class="oc-c text-center pt-1">...</div>
            <div class="oc-d">模块</div>
          </div>
          <div class="d-flex">
            <div class="ov-rows" id="ovRows">
              <div class="ov-row cur full d-flex"><div class="oc-a"></div><div class="oc-b"></div><div class="oc-c"></div><div class="oc-d">Slave_1</div></div>
              <div class="ov-row full d-flex"><div class="oc-a"></div><div class="oc-b"></div><div class="oc-c"></div><div class="oc-d">750-33...</div></div>
              <div class="ov-row full d-flex"><div class="oc-a"></div><div class="oc-b"></div><div class="oc-c"></div><div class="oc-d">75x-43...</div></div>
              <div class="ov-row full d-flex"><div class="oc-a"></div><div class="oc-b"></div><div class="oc-c"></div><div class="oc-d">75x-43...</div></div>
              <div class="ov-row full d-flex"><div class="oc-a"></div><div class="oc-b"></div><div class="oc-c"></div><div class="oc-d">75x-43...</div></div>
              <div class="ov-row full d-flex"><div class="oc-a"></div><div class="oc-b"></div><div class="oc-c"></div><div class="oc-d">75x-43...</div></div>
              <div class="ov-row full d-flex"><div class="oc-a"></div><div class="oc-b"></div><div class="oc-c"></div><div class="oc-d">75x-43...</div></div>
              <div class="ov-row full d-flex"><div class="oc-a"></div><div class="oc-b"></div><div class="oc-c"></div><div class="oc-d">75x-50...</div></div>
              <div class="ov-row full d-flex"><div class="oc-a"></div><div class="oc-b"></div><div class="oc-c"></div><div class="oc-d">75x-50...</div></div>
              <div class="ov-row full d-flex"><div class="oc-a"></div><div class="oc-b"></div><div class="oc-c"></div><div class="oc-d">75x-53...</div></div>
              <div class="ov-row full d-flex"><div class="oc-a"></div><div class="oc-b"></div><div class="oc-c"></div><div class="oc-d">75x-53...</div></div>
            </div>
            <div class="vscroll ov-scroll d-flex flex-column">
              <div class="sb-btn"><svg class="ic-s"><use href="#i-chev-up"/></svg></div>
              <div class="sb-thumb thumb-ov"><svg class="ic-s"><use href="#i-grip-h"/></svg></div>
              <div class="sb-btn mt-auto"><svg class="ic-s"><use href="#i-chev-dn"/></svg></div>
            </div>
          </div>
          <div class="ov-hbar d-flex">
            <div class="ov-htrack d-flex">
              <div class="sb-btn"><svg class="ic-s"><use href="#i-chev-l"/></svg></div>
              <div class="sb-thumb thumb-h thumb-small"><svg class="ic-s"><use href="#i-grip-v"/></svg></div>
              <div class="sb-btn ms-auto"><svg class="ic-s"><use href="#i-chev-r"/></svg></div>
            </div>
          </div>
        </div>
      </div>
      <div class="sep-dark"></div>
      <div class="insp-bar d-flex justify-content-end">
        <div class="insp-tab on it-a d-flex align-items-center"><svg class="ic"><use href="#i-zoomdoc"/></svg>属性</div>
        <div class="insp-tab it-b d-flex align-items-center"><svg class="ic"><use href="#i-infodoc"/></svg>信息<span class="info-dot">i</span></div>
        <div class="insp-tab it-c d-flex align-items-center"><svg class="ic"><use href="#i-diag"/></svg>诊断</div>
        <div class="insp-tools d-flex align-items-center">
          <svg class="ic-s"><use href="#i-restore"/></svg>
          <svg class="ic-s"><use href="#i-rows"/></svg>
          <i class="tri-up"></i>
        </div>
      </div>
    </section>

    <!-- Hardware catalog -->
    <section class="cat-pane d-flex flex-column">
      <div class="pane-head d-flex align-items-center">
        <span>硬件目录</span>
        <div class="head-tools d-flex align-items-center ms-auto">
          <svg class="ic-s"><use href="#i-restore"/></svg>
          <svg class="ic-s"><use href="#i-stack"/></svg>
          <svg class="ic-s"><use href="#i-tri-r"/></svg>
        </div>
      </div>
      <div class="navy-line"></div>
      <div class="opt-head d-flex align-items-center">选项</div>
      <div class="opt-body d-flex align-items-center justify-content-end"><svg class="ic me-1"><use href="#i-panel"/></svg></div>
      <div class="thin-gray"></div>
      <div class="sect-head cat-head d-flex align-items-center">
        <span class="sect-chev"><svg class="ic-s"><use href="#i-chev-dn"/></svg></span>
        <span class="sect-txt">目录</span>
      </div>
      <div class="search-row d-flex">
        <div class="search-in">&lt;搜索&gt;</div>
        <div class="icon-btn"><svg class="ic"><use href="#i-search-dn"/></svg></div>
        <div class="icon-btn"><svg class="ic"><use href="#i-search-up"/></svg></div>
      </div>
      <div class="filter-row d-flex align-items-center">
        <div class="check-box"></div>
        <span>过滤</span>
        <span class="ms-auto">配置文件</span>
        <div class="combo combo-prof d-flex align-items-center">
          <div class="combo-txt">&lt;全部&gt;</div>
          <div class="combo-btn"><i class="caret-d m-0"></i></div>
        </div>
        <div class="icon-btn"><svg class="ic"><use href="#i-cfg"/></svg></div>
      </div>
      <div class="d-flex">
        <div class="cat-list">
          <div class="cat-row d-flex align-items-center"><span class="caret-slot"><i class="caret-r"></i></span><svg class="ic"><use href="#i-folder"/></svg><span class="cn">网络组件</span></div>
          <div class="cat-row d-flex align-items-center"><span class="caret-slot"><i class="caret-r"></i></span><svg class="ic"><use href="#i-folder"/></svg><span class="cn">检测和监视</span></div>
          <div class="cat-row d-flex align-items-center"><span class="caret-slot"><i class="caret-r"></i></span><svg class="ic"><use href="#i-folder"/></svg><span class="cn">分布式 I/O</span></div>
          <div class="cat-row d-flex align-items-center"><span class="caret-slot"><i class="caret-r"></i></span><svg class="ic"><use href="#i-folder"/></svg><span class="cn">供电与配电</span></div>
          <div class="cat-row d-flex align-items-center"><span class="caret-slot"><i class="caret-r"></i></span><svg class="ic"><use href="#i-folder"/></svg><span class="cn">现场设备</span></div>
          <div class="cat-row d-flex align-items-center"><span class="caret-slot"><i class="caret-d m-0"></i></span><svg class="ic"><use href="#i-folder"/></svg><span class="cn">其它现场设备</span></div>
          <div class="cat-row lv-1 d-flex align-items-center"><span class="caret-slot"><i class="caret-r"></i></span><svg class="ic"><use href="#i-folder"/></svg><span class="cn">其它以太网设备</span></div>
          <div class="cat-row lv-1 d-flex align-items-center"><span class="caret-slot"><i class="caret-r"></i></span><svg class="ic"><use href="#i-folder"/></svg><span>PROFINET IO</span></div>
          <div class="cat-row lv-1 d-flex align-items-center"><span class="caret-slot"><i class="caret-d m-0"></i></span><svg class="ic"><use href="#i-folder"/></svg><span>PROFIBUS DP</span></div>
          <div class="cat-row lv-2 d-flex align-items-center"><span class="caret-slot"><i class="caret-d m-0"></i></span><svg class="ic"><use href="#i-folder"/></svg><span>I/O</span></div>
          <div class="cat-row lv-3 d-flex align-items-center"><span class="caret-slot"><i class="caret-d m-0"></i></span><svg class="ic"><use href="#i-folder"/></svg><span>WAGO Kontakttechnik GmbH &amp; Co.KG</span></div>
          <div class="cat-row lv-4 d-flex align-items-center"><span class="caret-slot"><i class="caret-d m-0"></i></span><svg class="ic"><use href="#i-folder"/></svg><span>WAGO-IO-SYSTEM 750</span></div>
          <div class="cat-row lv-5 d-flex align-items-center"><span class="caret-slot"><i class="caret-d m-0"></i></span><svg class="ic"><use href="#i-folder"/></svg><span class="cat-sel">WAGO 750-333 (FW: 12) PRO</span></div>
          <div class="cat-row lv-6 d-flex align-items-center"><span class="caret-slot"><i class="caret-r"></i></span><svg class="ic"><use href="#i-folder"/></svg><span class="cn">前端模块</span></div>
          <div class="cat-row lv-6 d-flex align-items-center"><svg class="ic no-caret"><use href="#i-mod"/></svg><span class="cn">通用模块</span></div>
          <div class="cat-row lv-6 d-flex align-items-center"><svg class="ic no-caret"><use href="#i-mod"/></svg><span>WAGO NETCON Dummy</span></div>
          <div class="cat-row lv-6 d-flex align-items-center"><svg class="ic no-caret"><use href="#i-mod"/></svg><span>750-333 No PI Channel</span></div>
          <div class="cat-row lv-6 d-flex align-items-center"><svg class="ic no-caret"><use href="#i-mod"/></svg><span>750-333 2 Byte PI Channel</span></div>
          <div class="cat-row lv-6 d-flex align-items-center"><svg class="ic no-caret"><use href="#i-mod"/></svg><span>75x-400 2DI/24V DC/3.0ms</span></div>
          <div class="cat-row lv-6 d-flex align-items-center"><svg class="ic no-caret"><use href="#i-mod"/></svg><span>*75x-400 2DI/24V DC/3.0ms</span></div>
          <div class="cat-row lv-6 d-flex align-items-center"><svg class="ic no-caret"><use href="#i-mod"/></svg><span>75x-401 2DI/24V DC/0.2ms</span></div>
          <div class="cat-row lv-6 d-flex align-items-center"><svg class="ic no-caret"><use href="#i-mod"/></svg><span>*75x-401 2DI/24V DC/0.2ms</span></div>
          <div class="cat-row lv-6 d-flex align-items-center"><svg class="ic no-caret"><use href="#i-mod"/></svg><span>75x-402 4DI/24V DC/3.0ms</span></div>
          <div class="cat-row lv-6 d-flex align-items-center"><svg class="ic no-caret"><use href="#i-mod"/></svg><span>*75x-402 4DI/24V DC/3.0ms</span></div>
          <div class="cat-row lv-6 d-flex align-items-center"><svg class="ic no-caret"><use href="#i-mod"/></svg><span>75x-403 4DI/24V DC/0.2ms</span></div>
          <div class="cat-row lv-6 d-flex align-items-center"><svg class="ic no-caret"><use href="#i-mod"/></svg><span>*75x-403 4DI/24V DC/0.2ms</span></div>
        </div>
        <div class="cat-scroll vscroll d-flex flex-column">
          <div class="sb-btn"><svg class="ic-s"><use href="#i-chev-up"/></svg></div>
          <div class="sb-thumb thumb-cat"><svg class="ic-s"><use href="#i-grip-h"/></svg></div>
          <div class="sb-btn mt-auto"><svg class="ic-s"><use href="#i-chev-dn"/></svg></div>
        </div>
        <div class="cat-pad"></div>
      </div>
      <div class="thin-gray"></div>
      <div class="sect-head info-head d-flex align-items-center">
        <span class="sect-chev"><svg class="ic-s"><use href="#i-chev-r"/></svg></span>
        <span class="sect-txt">信息</span>
      </div>
    </section>
    <div class="right-strip">
      <div class="edge-a"></div>
      <div class="edge-b"></div>
      <div class="edge-c"></div>
      <div class="edge-d"></div>
      <div class="edge-e"></div>
    </div>
  </main>

  <!-- Network tray widget -->
  <div class="net-pill"></div>
  <svg class="net-wifi" viewBox="0 0 32 18">
    <path d="M2 9c7-7 17-7 24 0M6 13c5-4 11-4 16 0M10 17c3-2 5-2 8 0" fill="none" stroke="#bdbdbd" stroke-width="2.500"/>
    <circle cx="23" cy="13" r="4.500" fill="none" stroke="#e2566a" stroke-width="2"/><path d="M20 16l6-6" stroke="#e2566a" stroke-width="2"/>
  </svg>
  <svg class="net-ring" viewBox="0 0 58 35">
    <circle cx="29" cy="29" r="28" fill="#9b9b9b" opacity=".92"/>
    <path d="M29 2A27 27 0 0 1 55 35" fill="none" stroke="#7fe0cf" stroke-width="1.500"/>
  </svg>
  <div class="net-pct">64<small>%</small></div>

  <script>
    // fill the empty rows of the overview table
    const ovRows = document.getElementById('ovRows');
    for (let i = 0; i < 16; i++) {
      const row = document.createElement('div');
      row.className = 'ov-row d-flex';
      row.innerHTML = '<div class="oc-a"></div><div class="oc-b"></div><div class="oc-c"></div><div class="oc-d"></div>';
      ovRows.appendChild(row);
    }
  </script>
  <script src="https://cdn.jsdelivr.net/npm/bootstrap@5.3.3/dist/js/bootstrap.bundle.min.js"></script>
</body>

</html>
